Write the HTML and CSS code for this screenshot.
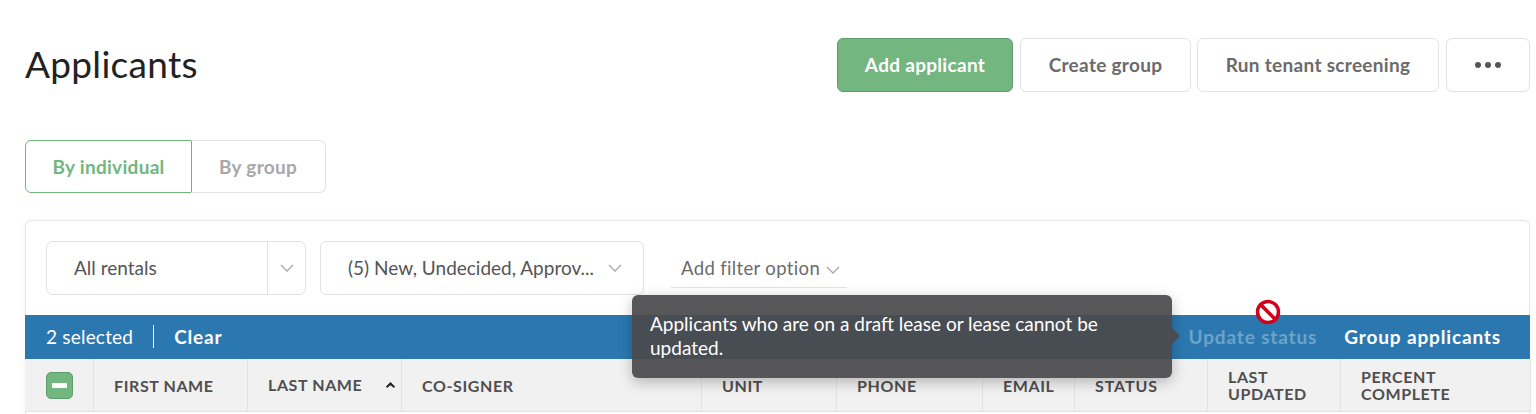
FILE: index.html
```html
<!DOCTYPE html>
<html lang="en">
<head>
    <meta charset="UTF-8">
    <title>Applicants</title>
    <link rel="stylesheet" href="styles.css">
</head>
<body>
    <div class="page">
        <header class="page-header">
            <h1>Applicants</h1>
            <div class="actions">
                <a class="btn btn-primary btn-add">Add applicant</a>
                <a class="btn btn-create">Create group</a>
                <a class="btn btn-run">Run tenant screening</a>
                <a class="btn btn-more" aria-label="More">
                    <svg width="28" height="8" viewBox="0 0 28 8"><circle cx="4" cy="4" r="3"/><circle cx="14" cy="4" r="3"/><circle cx="24" cy="4" r="3"/></svg>
                </a>
            </div>
        </header>

        <div class="tabs">
            <a class="tab tab-active">By individual</a>
            <a class="tab tab-group">By group</a>
        </div>

        <section class="card">
            <div class="filters">
                <div class="select select-rentals">
                    <span class="select-text">All rentals</span>
                    <span class="select-arrow">
                        <svg class="chevron" width="14" height="8" viewBox="0 0 14 8"><path d="M1 1l6 6 6-6"/></svg>
                    </span>
                </div>
                <div class="select select-status">
                    <span class="select-text">(5) New, Undecided, Approv...</span>
                    <svg class="chevron" width="14" height="8" viewBox="0 0 14 8"><path d="M1 1l6 6 6-6"/></svg>
                </div>
                <div class="add-filter">
                    Add filter option
                    <svg class="chevron" width="14" height="8" viewBox="0 0 14 8"><path d="M1 1l6 6 6-6"/></svg>
                </div>
            </div>

            <div class="bulk-bar">
                <span class="bulk-count">2 selected</span>
                <a class="bulk-clear">Clear</a>
                <div class="bulk-actions">
                    <a class="bulk-disabled">Update status</a>
                    <a class="bulk-link">Group applicants</a>
                </div>
            </div>

            <div class="table-head">
                <div class="th th-check"><span class="checkbox"></span></div>
                <div class="th">First name</div>
                <div class="th th-raised th-sort">Last name
                    <svg width="9" height="6" viewBox="0 0 9 6"><path d="M4.5 0L9 4.5 8 6 4.5 3.2 1 6 0 4.5z"/></svg>
                </div>
                <div class="th">Co-signer</div>
                <div class="th">Unit</div>
                <div class="th">Phone</div>
                <div class="th">Email</div>
                <div class="th th-status">Status</div>
                <div class="th th-raised">Last<br>updated</div>
                <div class="th th-raised">Percent<br>complete</div>
            </div>

            <div class="tooltip">Applicants who are on a draft lease or lease cannot be updated.</div>
            <svg class="no-icon" width="26" height="26" viewBox="0 0 26 26"><circle cx="13" cy="13" r="10.5"/><path d="M6 6l14 14"/></svg>
        </section>
    </div>
</body>
</html>
```

FILE: styles.css
```css
* {
    margin: 0;
    padding: 0;
    box-sizing: border-box;
}

html, body {
    height: 414px;
    overflow: hidden;
}

body {
    background: #fff;
    color: #555;
    font-family: 'Lato', 'Liberation Sans', sans-serif;
}

.page {
    padding: 38px 6px 0 25px;
}

.page-header {
    display: flex;
    justify-content: space-between;
    align-items: center;
    height: 54px;
}

h1 {
    margin-top: -4px;
    font-size: 37px;
    font-weight: 400;
    color: #222;
    letter-spacing: 0.3px;
}

.actions {
    display: flex;
    gap: 7px;
}

.btn {
    display: flex;
    align-items: center;
    justify-content: center;
    height: 54px;
    padding-bottom: 2px;
    border: 1px solid #e2e2e2;
    border-radius: 6px;
    background: #fff;
    color: #6b6b6b;
    font-size: 19px;
    font-weight: 700;
    letter-spacing: 0.3px;
}

.btn-primary {
    background: #73b680;
    border-color: #5f9e6c;
    color: #fff;
}

.btn-add { width: 176px; }
.btn-create { width: 171px; }
.btn-run { width: 242px; margin-left: -1px; }
.btn-more { width: 84px; padding-bottom: 0; }

.btn-more svg {
    fill: #555;
}

.tabs {
    display: flex;
    margin-top: 48px;
    height: 53px;
}

.tab {
    display: flex;
    align-items: center;
    justify-content: center;
    font-size: 19px;
    font-weight: 700;
    letter-spacing: 0.3px;
}

.tab-active {
    width: 167px;
    border: 1px solid #6fb57c;
    border-radius: 6px 0 0 6px;
    color: #73b680;
}

.tab-group {
    width: 135px;
    margin-left: -1px;
    border: 1px solid #e2e2e2;
    border-left: none;
    border-radius: 0 6px 6px 0;
    color: #a8a8a8;
}

.card {
    position: relative;
    width: 1505px;
    height: 194px;
    margin-top: 27px;
    border: 1px solid #e6e6e6;
    border-bottom: none;
    border-radius: 6px 6px 0 0;
    box-shadow: 0 0 8px rgba(0, 0, 0, 0.04);
}

.filters {
    display: flex;
    align-items: flex-start;
    height: 94px;
    padding: 20px 0 0 20px;
}

.select {
    display: flex;
    align-items: center;
    height: 54px;
    border: 1px solid #e2e2e2;
    border-radius: 6px;
    font-size: 19px;
    color: #555;
}

.select-text {
    flex: 1;
    margin-top: -2px;
    padding-left: 27px;
}

.select-rentals {
    width: 260px;
}

.select-arrow {
    display: flex;
    align-items: center;
    justify-content: center;
    width: 38px;
    height: 100%;
    border-left: 1px solid #e2e2e2;
}

.select-status {
    width: 324px;
    margin-left: 14px;
    padding-right: 21px;
}

.chevron {
    fill: none;
    stroke: #a8a8a8;
    stroke-width: 1.3;
}

.add-filter {
    display: flex;
    align-items: center;
    gap: 6px;
    width: 176px;
    height: 47px;
    margin-left: 27px;
    padding: 8px 0 0 10px;
    border-bottom: 1px solid #e2e2e2;
    font-size: 18.5px;
    color: #6b6b6b;
    letter-spacing: 0.35px;
}

.add-filter .chevron {
    margin-top: 4px;
}

.bulk-bar {
    display: flex;
    align-items: center;
    height: 44px;
    margin: 0 -1px;
    padding: 0 29px 2px 21px;
    background: #2b78b0;
    color: #fff;
    font-size: 19px;
}

.bulk-count {
    padding-right: 20px;
    border-right: 1px solid #fff;
    line-height: 23px;
    letter-spacing: 0.2px;
}

.bulk-clear {
    margin-left: 20px;
    font-weight: 700;
    letter-spacing: 0.8px;
}

.bulk-actions {
    display: flex;
    gap: 27px;
    margin-left: auto;
    font-weight: 700;
    letter-spacing: 0.85px;
}

.bulk-disabled {
    color: #6da3c9;
}

.table-head {
    display: grid;
    grid-template-columns: 69px 154px 154px 300px 135px 146px 92px 133px 133px 190px;
    width: 1506px;
    height: 53px;
    margin-left: -1px;
    background: #f1f1f1;
    border-bottom: 1px solid #e2e2e2;
    border-right: 1px solid #e2e2e2;
}

.th {
    display: flex;
    align-items: center;
    padding: 1px 0 0 20px;
    border-right: 1px solid #e2e2e2;
    font-size: 16px;
    line-height: 17px;
    font-weight: 700;
    color: #4f4f4f;
    text-transform: uppercase;
    letter-spacing: 0.6px;
}

.th:last-child {
    border-right: none;
}

.th-raised {
    padding-top: 0;
    padding-bottom: 1px;
}

.th-check {
    padding-left: 21px;
}

.th-sort {
    justify-content: space-between;
    padding-right: 6px;
}

.th-sort svg {
    fill: #222;
}

.th-status {
    letter-spacing: 0.9px;
}

.checkbox {
    position: relative;
    width: 27px;
    height: 27px;
    background: #73b680;
    border: 1px solid #5f9e6c;
    border-radius: 5px;
}

.checkbox::after {
    content: "";
    position: absolute;
    left: 5px;
    top: 10px;
    width: 15px;
    height: 5px;
    background: #fff;
    border-radius: 1px;
}

.tooltip {
    position: absolute;
    left: 606px;
    top: 74px;
    width: 540px;
    height: 83px;
    padding: 17px 60px 0 18px;
    background: rgba(74, 74, 76, 0.93);
    border-radius: 6px;
    box-shadow: 0 4px 14px rgba(0, 0, 0, 0.25);
    color: #fff;
    font-size: 19px;
    line-height: 24px;
}

.tooltip::after {
    content: "";
    position: absolute;
    right: -8px;
    top: 33px;
    border-left: 8px solid rgba(74, 74, 76, 0.93);
    border-top: 8px solid transparent;
    border-bottom: 8px solid transparent;
}

.no-icon {
    position: absolute;
    left: 1229px;
    top: 78px;
    fill: #fff;
    stroke: #d0021b;
    stroke-width: 3.5;
}
```
